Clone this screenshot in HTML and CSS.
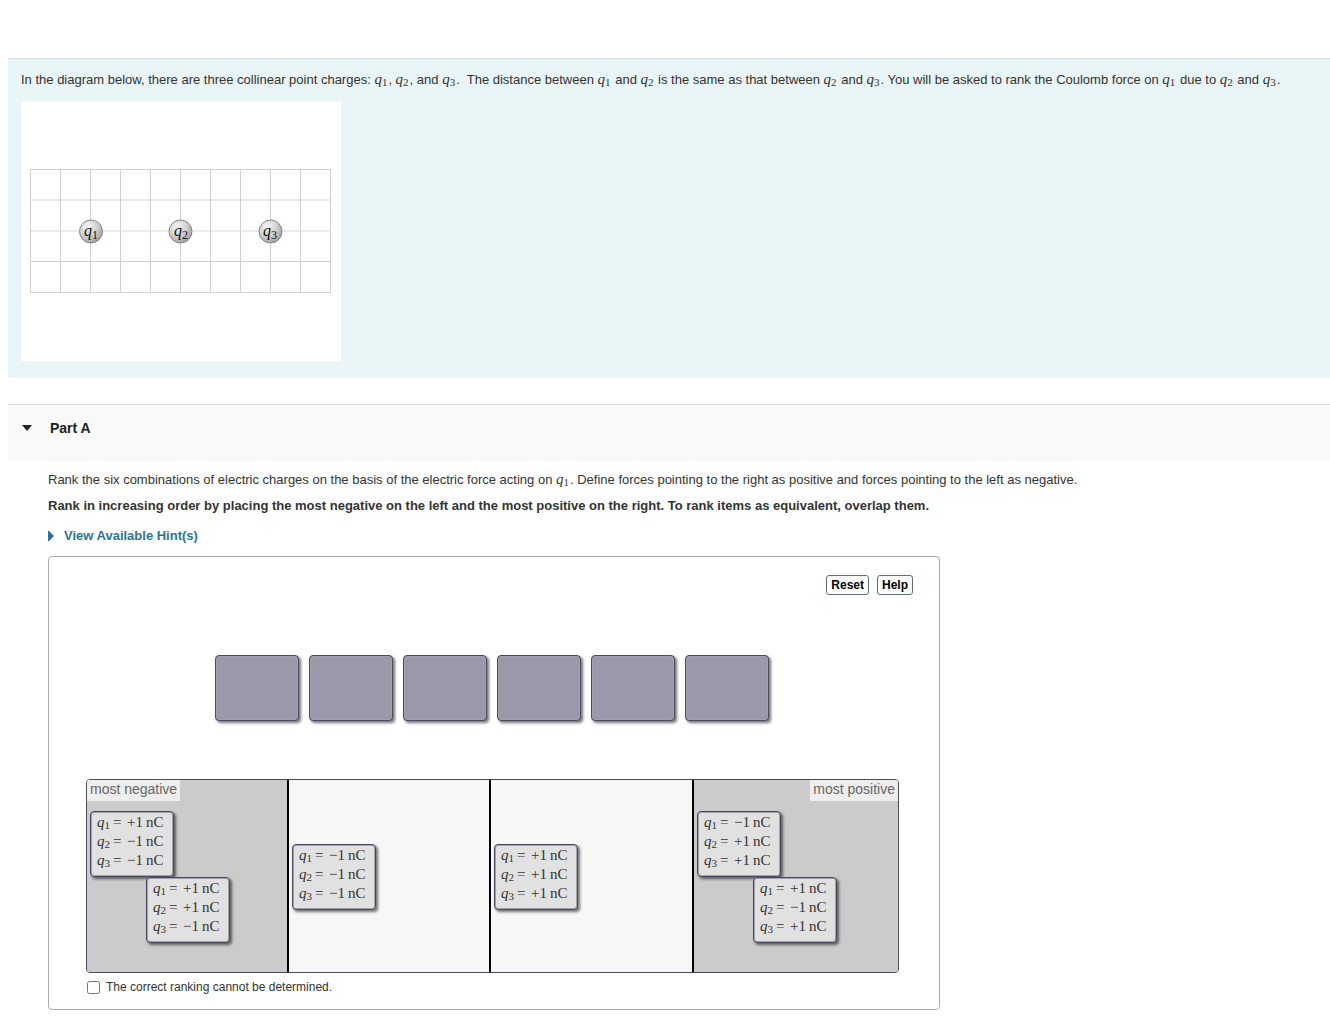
FILE: index.html
```html
<!DOCTYPE html>
<html lang="en">
<head>
<meta charset="utf-8">
<title>Part A - Ranking task</title>
<meta name="viewport" content="width=device-width, initial-scale=1">
<link rel="stylesheet" href="styles.css">
</head>
<body>
<main class="page">
  <section class="intro">
    <p class="text">In the diagram below, there are three collinear point charges: <span class="q"><i>q</i><sub>1</sub></span>, <span class="q"><i>q</i><sub>2</sub></span>, and <span class="q"><i>q</i><sub>3</sub></span>.&nbsp; The distance between <span class="q"><i>q</i><sub>1</sub></span> and <span class="q"><i>q</i><sub>2</sub></span> is the same as that between <span class="q"><i>q</i><sub>2</sub></span> and <span class="q"><i>q</i><sub>3</sub></span>. You will be asked to rank the Coulomb force on <span class="q"><i>q</i><sub>1</sub></span> due to <span class="q"><i>q</i><sub>2</sub></span> and <span class="q"><i>q</i><sub>3</sub></span>.</p>
    <svg class="diagram" width="320" height="260" viewBox="0 0 320 260" role="img" aria-label="Three charges on a grid">
      <defs>
        <radialGradient id="ball" cx="35%" cy="28%" r="75%">
          <stop offset="0" stop-color="#f4f4f4"/>
          <stop offset="0.5" stop-color="#d6d6d6"/>
          <stop offset="1" stop-color="#a2a2a2"/>
        </radialGradient>
      </defs>
      <path fill="none" stroke="#ebebeb" stroke-width="2" d="M10 99H309M10 130H309"/>
      <path fill="none" stroke="#d0d0d0" d="M9 68.500H310M9 191.500H310M9 160.500H310M9.500 68V192M39.500 68V192M69.500 68V192M99.500 68V192M129.500 68V192M159.500 68V192M189.500 68V192M219.500 68V192M249.500 68V192M279.500 68V192M309.500 68V192"/>
      <g fill="url(#ball)" stroke="#858585">
        <circle cx="70" cy="130.500" r="11.500"/>
        <circle cx="159.500" cy="130.500" r="11.500"/>
        <circle cx="249.500" cy="130.500" r="11.500"/>
      </g>
      <g class="ball-label">
        <text x="63" y="135"><tspan class="ball-q">q</tspan><tspan class="ball-n" dy="3">1</tspan></text>
        <text x="153" y="135"><tspan class="ball-q">q</tspan><tspan class="ball-n" dy="3">2</tspan></text>
        <text x="242" y="135"><tspan class="ball-q">q</tspan><tspan class="ball-n" dy="3">3</tspan></text>
      </g>
    </svg>
  </section>

  <section class="part">
    <header class="part-head">
      <svg width="10" height="6" viewBox="0 0 10 6" aria-hidden="true"><path fill="#222" d="M0 0h10L5 6z"/></svg>
      <h2 class="part-title">Part A</h2>
    </header>
    <div class="part-body">
      <p class="text">Rank the six combinations of electric charges on the basis of the electric force acting on <span class="q"><i>q</i><sub>1</sub></span>. Define forces pointing to the right as positive and forces pointing to the left as negative.</p>
      <p class="text instruction">Rank in increasing order by placing the most negative on the left and the most positive on the right. To rank items as equivalent, overlap them.</p>
      <a class="hints" href="#hints"><svg width="6" height="10" viewBox="0 0 6 10" aria-hidden="true"><path fill="#2b7593" d="M0 0h1l5 5-5 5H0z"/></svg>View Available Hint(s)</a>

      <div class="widget">
        <div class="toolbar">
          <button class="btn" type="button">Reset</button>
          <button class="btn" type="button">Help</button>
        </div>
        <div class="tray">
          <div class="card slot"></div>
          <div class="card slot"></div>
          <div class="card slot"></div>
          <div class="card slot"></div>
          <div class="card slot"></div>
          <div class="card slot"></div>
        </div>
        <div class="board">
          <div class="bin bin-end">
            <span class="bin-label">most negative</span>
            <div class="card">
              <div class="eq"><span><i>q</i><sub>1</sub></span><span>=</span><span>+1</span><span>nC</span></div>
              <div class="eq"><span><i>q</i><sub>2</sub></span><span>=</span><span>−1</span><span>nC</span></div>
              <div class="eq"><span><i>q</i><sub>3</sub></span><span>=</span><span>−1</span><span>nC</span></div>
            </div>
            <div class="card card-shifted">
              <div class="eq"><span><i>q</i><sub>1</sub></span><span>=</span><span>+1</span><span>nC</span></div>
              <div class="eq"><span><i>q</i><sub>2</sub></span><span>=</span><span>+1</span><span>nC</span></div>
              <div class="eq"><span><i>q</i><sub>3</sub></span><span>=</span><span>−1</span><span>nC</span></div>
            </div>
          </div>
          <div class="bin">
            <div class="card">
              <div class="eq"><span><i>q</i><sub>1</sub></span><span>=</span><span>−1</span><span>nC</span></div>
              <div class="eq"><span><i>q</i><sub>2</sub></span><span>=</span><span>−1</span><span>nC</span></div>
              <div class="eq"><span><i>q</i><sub>3</sub></span><span>=</span><span>−1</span><span>nC</span></div>
            </div>
          </div>
          <div class="bin">
            <div class="card">
              <div class="eq"><span><i>q</i><sub>1</sub></span><span>=</span><span>+1</span><span>nC</span></div>
              <div class="eq"><span><i>q</i><sub>2</sub></span><span>=</span><span>+1</span><span>nC</span></div>
              <div class="eq"><span><i>q</i><sub>3</sub></span><span>=</span><span>+1</span><span>nC</span></div>
            </div>
          </div>
          <div class="bin bin-end">
            <span class="bin-label bin-label-right">most positive</span>
            <div class="card">
              <div class="eq"><span><i>q</i><sub>1</sub></span><span>=</span><span>−1</span><span>nC</span></div>
              <div class="eq"><span><i>q</i><sub>2</sub></span><span>=</span><span>+1</span><span>nC</span></div>
              <div class="eq"><span><i>q</i><sub>3</sub></span><span>=</span><span>+1</span><span>nC</span></div>
            </div>
            <div class="card card-shifted">
              <div class="eq"><span><i>q</i><sub>1</sub></span><span>=</span><span>+1</span><span>nC</span></div>
              <div class="eq"><span><i>q</i><sub>2</sub></span><span>=</span><span>−1</span><span>nC</span></div>
              <div class="eq"><span><i>q</i><sub>3</sub></span><span>=</span><span>+1</span><span>nC</span></div>
            </div>
          </div>
        </div>
        <label class="undetermined"><input type="checkbox" class="check">The correct ranking cannot be determined.</label>
      </div>
    </div>
  </section>
</main>
</body>
</html>
```
FILE: styles.css
```css
* { box-sizing: border-box; }

body {
  margin: 0;
  background: #fff;
  color: #333;
  font: 13px/20px "Liberation Sans", Arial, sans-serif;
}

.page { padding: 58px 0 10px 8px; }
.text { margin: 0; }

.q, .eq {
  font-family: "Liberation Serif", "Times New Roman", serif;
}
.q {
  font-size: 15px;
  line-height: 1;
  margin-right: 1px;
}
sub {
  font-size: 11px;
  line-height: 0;
  vertical-align: -2px;
}

.intro {
  padding: 11px 13px 17px;
  border-top: 1px solid #d9dddd;
  background: #eaf5f7;
}
.diagram {
  display: block;
  margin-top: 11px;
  background: #fff;
}
.ball-label {
  font-family: "Liberation Serif", "Times New Roman", serif;
  fill: #111;
}
.ball-q { font-size: 16px; font-style: italic; }
.ball-n { font-size: 12px; }

.part { margin-top: 26px; }
.part-head {
  display: flex;
  align-items: center;
  gap: 18px;
  height: 57px;
  padding: 0 14px 10px;
  border-top: 1px solid #ddd;
  background: #f9f9f9;
}
.part-title {
  margin: 0;
  color: #222;
  font-size: 14px;
}
.part-body { padding: 9px 40px 0; }
.instruction {
  margin-top: 6px;
  font-weight: bold;
}
.hints {
  display: flex;
  align-items: center;
  gap: 10px;
  width: max-content;
  margin-top: 10px;
  color: #2b7593;
  font-weight: bold;
  text-decoration: none;
}

.widget {
  max-width: 892px;
  margin-top: 10px;
  padding: 18px 40px 12px 37px;
  border: 1px solid #aaa;
  border-radius: 4px;
}
.toolbar {
  display: flex;
  justify-content: flex-end;
  gap: 8px;
  margin-right: -14px;
}
.btn {
  height: 20px;
  padding: 0 4px;
  border: 1px solid #5f6f78;
  border-radius: 3px;
  background: #fff;
  color: #000;
  font: bold 12px/18px "Liberation Sans", Arial, sans-serif;
}

.tray {
  display: flex;
  justify-content: center;
  gap: 10px;
  margin-top: 60px;
  padding-right: 1px;
}
.card {
  width: 84px;
  height: 66px;
  padding: 1px 6px;
  border: 1px solid #4c4a5c;
  border-radius: 4px;
  background: #e1e1e1;
  box-shadow: inset 0 0 0 1px #a3a1b0, 2px 2px 3px rgba(0, 0, 0, 0.55);
}
.slot { background: #9b99a9; }

.board {
  display: grid;
  grid-template-columns: 202fr 202fr 203fr 204fr;
  height: 194px;
  margin-top: 58px;
  border: 1px solid #4c4a5c;
  border-radius: 4px;
  background: #f7f7f7;
  overflow: hidden;
}
.bin {
  position: relative;
  display: flex;
  flex-direction: column;
  justify-content: center;
  align-items: flex-start;
  padding: 2px 3px 0;
  border-right: 2px solid #000;
}
.bin:last-child { border-right: 0; }
.bin-end { background: #cbcbcb; }
.card-shifted { margin-left: 56px; }
.bin-label {
  position: absolute;
  top: 0;
  left: 0;
  height: 21px;
  padding: 0 3px;
  background: #eee;
  color: #666;
  font-size: 14px;
  line-height: 18px;
}
.bin-label-right { right: 0; left: auto; }

.eq {
  display: grid;
  grid-template-columns: 16px 14px 19px auto;
  justify-content: start;
  font-size: 15px;
  line-height: 19px;
}

.undetermined {
  display: flex;
  align-items: center;
  gap: 6px;
  width: max-content;
  margin-top: 4px;
  font-size: 12px;
}
.check {
  width: 13px;
  height: 13px;
  margin: 0 0 0 1px;
}
```
